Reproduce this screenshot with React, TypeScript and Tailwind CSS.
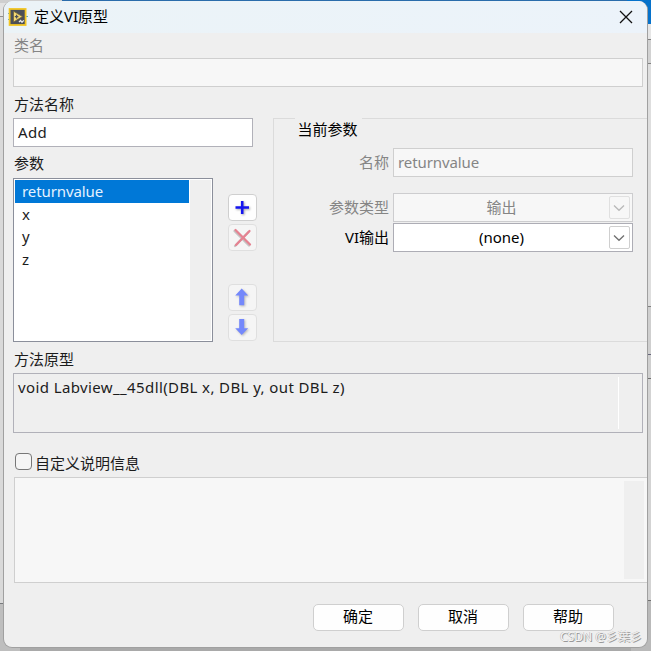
import type { ReactNode } from "react";

function AppIcon() {
  return (
    <svg width="20" height="18" viewBox="0 0 20 18" className="shrink-0">
      <path d="M0 5.5H3M0 11.5H3M17 8.5H20" stroke="#5aa5c8" strokeWidth="1.2" />
      <rect x="1.6" y="1" width="16" height="16" fill="#4b4f58" stroke="#f2c522" strokeWidth="1.8" />
      <path d="M5.5 3.2L14.5 8.6L5.5 14Z" fill="#f5d873" stroke="#6f6338" strokeWidth="0.8" />
      <path d="M6.8 8.6H10.4M8.6 6.8V10.4" stroke="#4b4f58" strokeWidth="1.3" />
      <path d="M11 14.2L12.5 12.4L14 14.2L15.8 12.4" stroke="#e8e8e8" strokeWidth="1.3" fill="none" />
    </svg>
  );
}

function ToolButton({ children, disabled, className = "" }: { children: ReactNode; disabled?: boolean; className?: string }) {
  return (
    <button
      className={`flex h-[27px] w-[29px] shrink-0 items-center justify-center rounded-[4px] border pr-px pb-px ${
        disabled ? "border-[#dfdfdf] bg-[#f5f5f5]" : "border-[#cfcfcf] bg-[#fefefe]"
      } ${className}`}
    >
      {children}
    </button>
  );
}

function Arrow({ down }: { down?: boolean }) {
  return (
    <svg width="20" height="22" viewBox="0 0 20 22" className="drop-shadow-[1px_1px_1px_rgba(0,0,0,0.25)]">
      <path
        d={down ? "M7.2 3H12.2V12.2H16.2L9.7 19L3.2 12.2H7.2Z" : "M9.7 2.5L16.2 9.6H12.2V19.2H7.2V9.6H3.2Z"}
        fill="#7488fb"
      />
    </svg>
  );
}

function Select({ value, disabled }: { value: string; disabled?: boolean }) {
  return (
    <div
      className={`flex h-[29px] w-[240px] items-center border pr-[2px] ${
        disabled ? "border-[#cdcdcf] bg-[#f7f7f7] text-[#858585]" : "border-[#adadb5] bg-white text-black"
      }`}
    >
      <span className="flex-1 text-center">{value}</span>
      <span
        className={`flex h-[23px] w-[21px] items-center justify-center rounded-[2px] border pr-px ${
          disabled ? "border-[#e0e0e0]" : "border-[#cfcfcf]"
        }`}
      >
        <svg width="12" height="8" viewBox="0 0 12 8" fill="none">
          <path d="M1 1.5L6 6.3L11 1.5" stroke={disabled ? "#b9b9b9" : "#707070"} strokeWidth="1.3" />
        </svg>
      </span>
    </div>
  );
}

function DialogButton({ children }: { children: ReactNode }) {
  return (
    <button className="h-[27px] w-[91px] rounded-[5px] border border-[#cfcfcf] bg-[#fefefe] pr-px pb-[2px] text-black">
      {children}
    </button>
  );
}

function Backdrop() {
  return (
    <div className="flex h-full flex-col">
      <div className="flex h-[3px] shrink-0">
        <div className="w-[62px] bg-[#cfcfcf]" />
        <div className="flex-1 bg-[#2a6cab]" />
        <div className="w-[24px] bg-[#0672cb]" />
      </div>
      <div className="flex min-h-0 flex-1 justify-between">
        <div className="flex w-[20px] flex-col">
          <div className="h-[13px] bg-[#e3e3e3]" />
          <div className="h-[587px] border-t border-[#8f8f8f] bg-[#d9d9d9]" />
          <div className="flex-1 border-t border-[#777a7d] bg-[#bebebe]" />
        </div>
        <div className="flex-1 bg-[#a9a9a9]" />
        <div className="flex w-[20px] flex-col">
          <div className="h-[21px] bg-[#0672cb]" />
          <div className="h-[15px] bg-[#e6e6e6]" />
          <div className="h-[24px] border-t border-[#808080] bg-[#d2d2d2]" />
          <div className="h-[243px] border-t border-[#808080] bg-[#dedede]" />
          <div className="h-[48px] border-t border-[#808080] bg-[#cfcfcf]" />
          <div className="h-[24px] border-t border-[#66667a] bg-[#cfcfcf]" />
          <div className="h-[222px] border-t border-[#707070] bg-[#d3d3d3]" />
          <div className="flex-1 border-t border-[#707070] bg-[#b9b9b9]" />
        </div>
      </div>
    </div>
  );
}

const items = ["returnvalue", "x", "y", "z"];

export default function App() {
  return (
    <div className="relative h-[651px] w-[651px] overflow-hidden bg-[#b0b0b0] font-['Noto_Sans','Noto_Sans_CJK_SC',sans-serif] text-[15px] leading-none text-[#1c1c1c]">
      <Backdrop />
      <div className="absolute top-px left-[3px] flex h-[647px] w-[645px] flex-col overflow-hidden rounded-[9px] border border-t-0 border-[#a0a0a0] bg-[#efefef]">
        <header className="flex h-[32px] shrink-0 items-center bg-gradient-to-r from-[#ebf3f7] to-[#ecf3fa] pr-[14px] pb-px pl-[4px]">
          <AppIcon />
          <h1 className="ml-[6px] text-[15px] text-black">定义VI原型</h1>
          <svg width="14" height="14" viewBox="0 0 14 14" className="ml-auto">
            <path d="M1 1L13 13M13 1L1 13" stroke="#111" strokeWidth="1.3" />
          </svg>
        </header>

        <div className="flex h-[25px] shrink-0 items-center pb-px pl-[10px] text-[#858585]">类名</div>
        <div className="ml-[9px] h-[29px] w-[630px] shrink-0 border border-[#cfcfcf] bg-[#f7f7f7]" />
        <div className="flex h-[31px] shrink-0 items-center pt-[4px] pl-[10px]">方法名称</div>

        <div className="flex h-[224px] shrink-0 pl-[9px]">
          <div className="flex w-[260px] flex-col">
            <div className="flex h-[29px] w-[240px] items-center border border-[#b1b1b9] bg-white pl-[4px] tracking-[0.4px]">Add</div>
            <div className="flex flex-1">
              <div className="flex w-[200px] flex-col">
                <div className="flex h-[31px] items-center pt-[2px] pl-px">参数</div>
                <div className="flex h-[164px] border border-[#8b8f9b] bg-white p-px">
                  <ul className="w-[175px]">
                    {items.map((item, i) => (
                      <li
                        key={item}
                        className={
                          i === 0
                            ? "flex h-[23px] w-[174px] items-center bg-[#0078d7] pl-[7px] tracking-[-0.1px] text-[#e4f2ff]"
                            : "flex h-[22.5px] items-center pl-[7px]"
                        }
                      >
                        {item}
                      </li>
                    ))}
                  </ul>
                  <div className="flex-1 bg-[#efefef]" />
                </div>
              </div>
              <div className="flex flex-col gap-[3px] pt-[47px] pl-[15px]">
                <ToolButton>
                  <svg width="17" height="17" viewBox="0 0 17 17" className="drop-shadow-[1px_1px_1px_rgba(0,0,0,0.35)]">
                    <path d="M1.5 8.5H15M8.2 2V15" stroke="#1414f0" strokeWidth="2.6" />
                  </svg>
                </ToolButton>
                <ToolButton disabled>
                  <svg width="19" height="19" viewBox="0 0 19 19" className="drop-shadow-[-1px_1px_0px_rgba(0,0,0,0.2)]">
                    <path d="M2.5 2L17 16.5M16.5 3L3 17" stroke="#e58291" strokeWidth="2.3" strokeLinecap="round" />
                  </svg>
                </ToolButton>
                <ToolButton disabled className="mt-[30px]">
                  <Arrow />
                </ToolButton>
                <ToolButton disabled>
                  <Arrow down />
                </ToolButton>
              </div>
            </div>
          </div>

          <fieldset className="flex flex-1 flex-col border border-r-0 border-[#dbdbdb]">
            <div className="-mt-px ml-[21px] flex h-[24px] w-[67px] shrink-0 items-center justify-center bg-[#efefef] pr-[2px] pb-px">
              <span className="text-black">当前参数</span>
            </div>
            <div className="mt-[6px] flex items-center text-[#858585]">
              <span className="w-[119px] pr-[4px] text-right">名称</span>
              <div className="flex h-[29px] w-[240px] items-center border border-[#cfcfcf] bg-[#f7f7f7] pl-[4px] tracking-[-0.1px]">
                returnvalue
              </div>
            </div>
            <div className="mt-[16px] flex items-center text-[#858585]">
              <span className="w-[119px] pr-[4px] text-right">参数类型</span>
              <Select value="输出" disabled />
            </div>
            <div className="mt-px flex items-center text-black">
              <span className="w-[119px] pr-[4px] text-right">VI输出</span>
              <Select value="(none)" />
            </div>
          </fieldset>
        </div>

        <div className="flex h-[31px] shrink-0 items-center pt-[4px] pl-[10px]">方法原型</div>
        <div className="ml-[9px] flex h-[60px] w-[630px] shrink-0 justify-between border border-[#b1b1b9] py-[3px] pr-[23px] pl-[4px]">
          <span className="pt-[3px] tracking-[0.39px]">void Labview__45dll(DBL x, DBL y, out DBL z)</span>
          <div className="w-px bg-white" />
        </div>

        <label className="flex h-[44px] shrink-0 items-start pt-[20px] pl-[11px]">
          <span className="h-[17px] w-[17px] rounded-[4px] border border-[#777] bg-[#f5f5f5]" />
          <span className="mt-[3px] ml-[3px]">自定义说明信息</span>
        </label>
        <div className="ml-[10px] flex h-[106px] shrink-0 justify-end border border-r-0 border-[#cfcfcf] bg-[#f7f7f7] py-[3px] pr-[3px]">
          <div className="w-[20px] bg-[#efefef]" />
        </div>

        <footer className="mt-[21px] flex justify-end gap-[14px] pr-[33px]">
          <DialogButton>确定</DialogButton>
          <DialogButton>取消</DialogButton>
          <DialogButton>帮助</DialogButton>
        </footer>
      </div>
      <div className="absolute top-[631px] left-[560px] text-[12px] whitespace-nowrap text-[#f4f4f4] [text-shadow:1px_1px_0_#999,-0.5px_-0.5px_0_#b5b5b5]">
        CSDN @彡葉彡
      </div>
    </div>
  );
}
